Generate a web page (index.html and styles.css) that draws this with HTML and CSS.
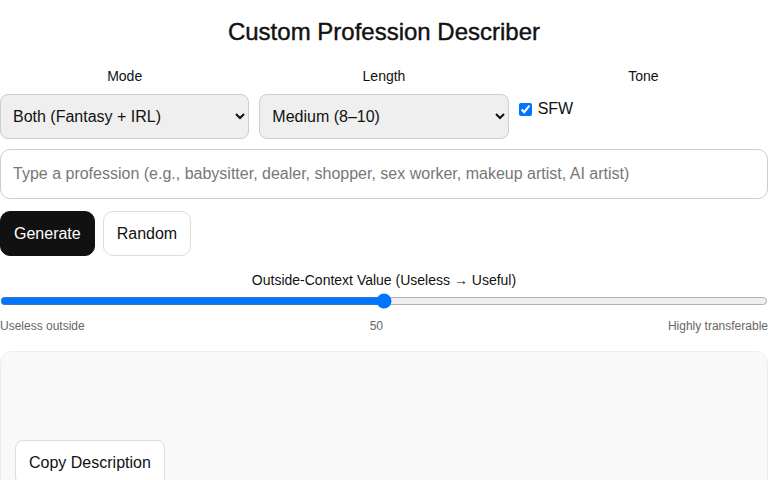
FILE: index.html
```html
<!DOCTYPE html>
<html lang="en">
<head>
    <meta charset="UTF-8">
    <meta name="viewport" content="width=device-width, initial-scale=1.0">
    <title>Custom Profession Describer</title>
    <link rel="stylesheet" href="styles.css">
</head>

<body>
    <h1 class="title">Custom Profession Describer</h1>

    <div class="controls">
        <div class="control">
            <label class="control-label" for="mode">Mode</label>
            <select id="mode" class="select">
                <option>Both (Fantasy + IRL)</option>
                <option>Fantasy</option>
                <option>IRL</option>
            </select>
        </div>
        <div class="control">
            <label class="control-label" for="length">Length</label>
            <select id="length" class="select">
                <option>Short (4–6)</option>
                <option selected>Medium (8–10)</option>
                <option>Long (12–15)</option>
            </select>
        </div>
        <div class="control">
            <span class="control-label">Tone</span>
            <label class="check"><input type="checkbox" id="sfw" checked> SFW</label>
        </div>
    </div>

    <input type="text" class="profession" id="profession" placeholder="Type a profession (e.g., babysitter, dealer, shopper, sex worker, makeup artist, AI artist)">

    <div class="actions">
        <button class="btn btn-dark">Generate</button>
        <button class="btn">Random</button>
    </div>

    <div class="slider-block">
        <label class="slider-label" for="value">Outside-Context Value (Useless → Useful)</label>
        <input type="range" id="value" class="slider" min="0" max="100" value="50">
        <div class="slider-scale">
            <span>Useless outside</span>
            <span>50</span>
            <span>Highly transferable</span>
        </div>
    </div>

    <div class="output">
        <div class="output-text"></div>
        <button class="btn btn-small">Copy Description</button>
    </div>
</body>
</html>
```

FILE: styles.css
```css
/* General Page Styling */
body, html {
    font-family: Arial, "Liberation Sans", sans-serif;
    background-color: #ffffff;
    color: #111;
    margin: 0;
    padding: 0;
}

/* Title */
.title {
    text-align: center;
    font-size: 24px;
    font-weight: 400;
    -webkit-text-stroke: 0.4px #111;
    margin: 18px 0 22px;
}

/* Mode / Length / Tone row */
.controls {
    display: grid;
    grid-template-columns: repeat(3, 1fr);
    gap: 10px;
}

.control {
    display: flex;
    flex-direction: column;
}

.control-label {
    text-align: center;
    font-size: 14px;
    margin-bottom: 10px;
}

.select {
    font-family: inherit;
    font-size: 16px;
    padding: 12px 8px;
    background: #efefef;
    border: 1px solid #ccc;
    border-radius: 8px;
    color: #111;
}

.check {
    display: flex;
    align-items: center;
    gap: 6px;
    font-size: 16px;
    margin-top: 6px;
}

.check input {
    margin: 0;
}

/* Profession field */
.profession {
    display: block;
    box-sizing: border-box;
    width: 100%;
    height: 50px;
    margin: 10px 0 12px;
    padding: 0 12px;
    font-family: inherit;
    font-size: 16px;
    border: 1px solid #ccc;
    border-radius: 10px;
}

.profession::placeholder {
    color: #777;
}

/* Buttons */
.actions {
    display: flex;
    gap: 8px;
}

.btn {
    font-family: inherit;
    font-size: 16px;
    line-height: 19px;
    padding: 12px 13px;
    background: #fff;
    color: #111;
    border: 1px solid #ddd;
    border-radius: 10px;
    cursor: pointer;
}

.btn-dark {
    background: #111;
    border-color: #111;
    color: #fff;
}

.btn-small {
    border-radius: 8px;
}

/* Slider */
.slider-block {
    margin-top: 16px;
}

.slider-label {
    display: block;
    text-align: center;
    font-size: 14px;
}

.slider {
    display: block;
    width: 100%;
    margin: 5px 0 0;
}

.slider-scale {
    display: flex;
    justify-content: space-between;
    font-size: 12px;
    color: #666;
    margin-top: 10px;
}

/* Output box */
.output {
    margin-top: 18px;
    padding: 15px 14px;
    background: #f9f9f9;
    border: 1px solid #eee;
    border-radius: 12px;
}

.output-text {
    min-height: 73px;
}
```
